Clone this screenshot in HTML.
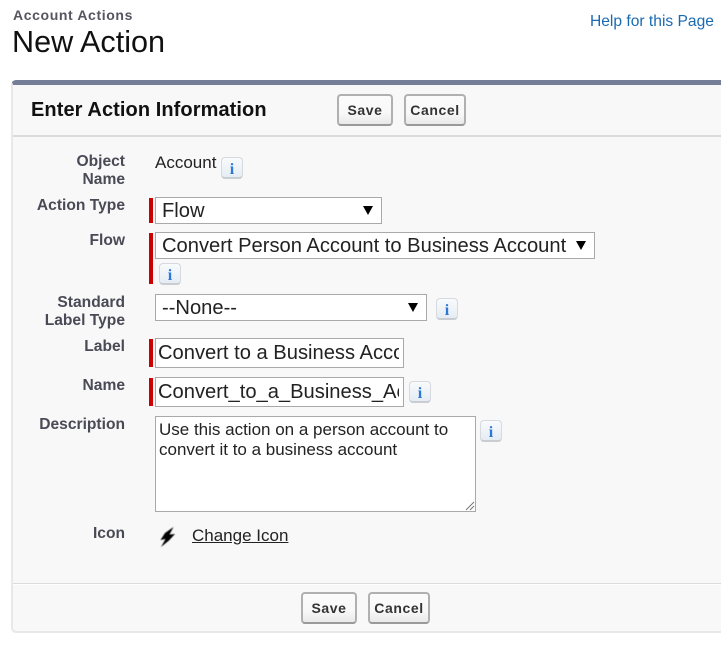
<!DOCTYPE html>
<html>
<head>
<meta charset="utf-8">
<style>
html,body{margin:0;padding:0;background:#fff;}
body{width:721px;height:646px;overflow:hidden;position:relative;font-family:"Liberation Sans",sans-serif;}
.a{position:absolute;white-space:nowrap;}
.panel{position:absolute;left:11px;top:80px;width:720px;height:553px;box-sizing:border-box;background:#f8f8f8;border:2px solid #e8e8e8;border-top:5px solid #747e96;border-radius:5px;}
.line{position:absolute;left:13px;width:708px;}
.lbl{position:absolute;right:596px;text-align:right;font-weight:bold;font-size:15.6px;line-height:18px;color:#4a4a56;white-space:nowrap;}
.btn{position:absolute;box-sizing:border-box;height:32px;border:2px solid #b0b0b0;border-bottom-color:#999;border-radius:4px;background:linear-gradient(#fbfbfb,#f8f8f8 60%,#e9e9e9);font-weight:bold;font-size:14px;letter-spacing:.6px;color:#333;text-align:center;line-height:28px;}
.sel,.inp,.ta{position:absolute;box-sizing:border-box;background:#fff;border:1px solid #a9a9a9;color:#222;font-size:20.15px;white-space:nowrap;overflow:hidden;}
.sel{padding-left:6px;line-height:26px;}
.inp{padding-left:2px;line-height:29px;}
.inp span{display:block;overflow:hidden;width:241px;}
.ta{font-size:17px;line-height:20px;padding:3px 3px;white-space:normal;}
.red{position:absolute;left:149px;width:4px;background:#c00;}
.arr{position:absolute;width:0;height:0;border-left:5px solid transparent;border-right:5px solid transparent;border-top:9px solid #000;}
.i{position:absolute;box-sizing:border-box;width:22px;height:22px;border:1px solid #d6d9de;border-bottom:2px solid #c9ccd1;border-radius:4px;background:linear-gradient(#f9fbfd,#e6ecf3);font-family:"Liberation Serif",serif;font-weight:bold;font-size:16px;line-height:24px;text-align:center;color:#2a78d8;}
</style>
</head>
<body>
<div class="a" style="left:13px;top:7px;font-size:14px;line-height:16px;font-weight:bold;color:#55565f;letter-spacing:.62px;">Account Actions</div>
<div class="a" style="left:12px;top:24px;font-size:30.6px;line-height:36px;color:#111;">New Action</div>
<div class="a" style="left:590px;top:13px;font-size:15.6px;line-height:18px;color:#1a6ab2;">Help for this Page</div>

<div class="panel"></div>
<div class="line" style="top:135px;height:2px;background:#dbdbdb;"></div>
<div class="line" style="top:583px;height:1px;background:#dcdcdc;"></div>
<div class="line" style="top:584px;height:1px;background:#fff;"></div>

<div class="a" style="left:31px;top:99px;font-size:20px;line-height:22px;font-weight:bold;color:#111;letter-spacing:.08px;">Enter Action Information</div>
<div class="btn" style="left:337px;top:94px;width:56px;">Save</div>
<div class="btn" style="left:404px;top:94px;width:62px;">Cancel</div>

<div class="lbl" style="top:153px;">Object<br>Name</div>
<div class="a" style="left:155px;top:154px;font-size:17px;line-height:18px;color:#222;">Account</div>
<div class="i" style="left:221px;top:157px;">i</div>

<div class="lbl" style="top:197px;">Action Type</div>
<div class="red" style="top:198px;height:25px;"></div>
<div class="sel" style="left:155px;top:197px;width:227px;height:27px;">Flow</div>
<div class="arr" style="left:363px;top:206px;"></div>

<div class="lbl" style="top:232px;">Flow</div>
<div class="red" style="top:233px;height:51px;"></div>
<div class="sel" style="left:155px;top:232px;width:440px;height:27px;">Convert Person Account to Business Account</div>
<div class="arr" style="left:576px;top:241px;"></div>
<div class="i" style="left:159px;top:263px;">i</div>

<div class="lbl" style="top:294px;">Standard<br>Label Type</div>
<div class="sel" style="left:155px;top:294px;width:272px;height:27px;">--None--</div>
<div class="arr" style="left:408px;top:303px;"></div>
<div class="i" style="left:436px;top:298px;">i</div>

<div class="lbl" style="top:338px;">Label</div>
<div class="red" style="top:339px;height:28px;"></div>
<div class="inp" style="left:155px;top:338px;width:249px;height:30px;"><span>Convert to a Business Account</span></div>

<div class="lbl" style="top:377px;">Name</div>
<div class="red" style="top:378px;height:28px;"></div>
<div class="inp" style="left:155px;top:377px;width:249px;height:30px;"><span>Convert_to_a_Business_Account</span></div>
<div class="i" style="left:409px;top:381px;">i</div>

<div class="lbl" style="top:416px;">Description</div>
<div class="ta" style="left:155px;top:416px;width:321px;height:96px;">Use this action on a person account to convert it to a business account</div>
<svg class="a" style="left:464px;top:500px;" width="11" height="11" viewBox="0 0 11 11"><path d="M2 10 L10 2 M6 10 L10 6" stroke="#777" stroke-width="1" fill="none"/></svg>
<div class="i" style="left:480px;top:420px;">i</div>

<div class="lbl" style="top:525px;">Icon</div>
<svg class="a" style="left:159px;top:526px;filter:blur(.4px);" width="17" height="22" viewBox="0 0 17 22"><path d="M14.500 1 L6 7 L1.500 14 L6.500 13 L2 21 L10 14.500 L16 8 L10.500 8.500 Z" fill="#000"/></svg>
<div class="a" style="left:192px;top:527px;font-size:17px;line-height:18px;color:#222;text-decoration:underline;">Change Icon</div>

<div class="btn" style="left:301px;top:592px;width:56px;">Save</div>
<div class="btn" style="left:368px;top:592px;width:62px;">Cancel</div>
</body>
</html>
